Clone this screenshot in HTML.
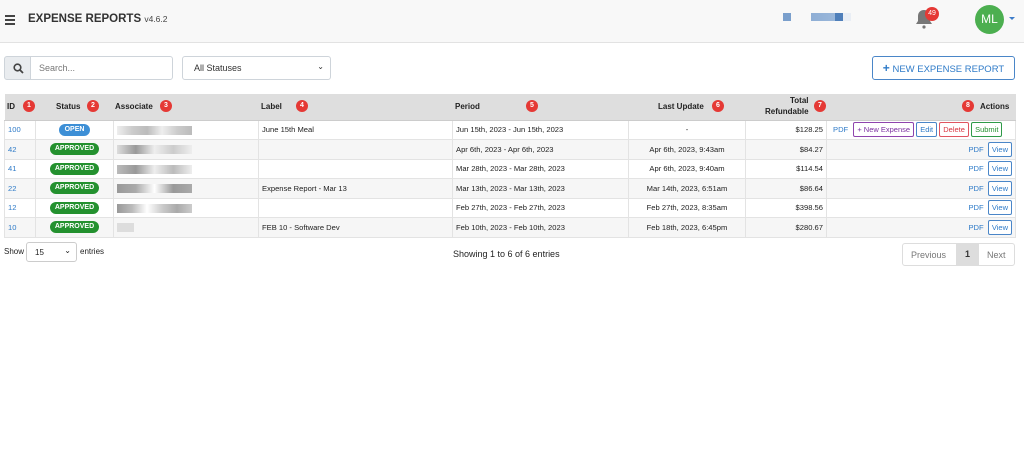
<!DOCTYPE html>
<html><head><style>
*{box-sizing:border-box;margin:0;padding:0}
body{width:1024px;height:455px;background:#fff;font-family:"Liberation Sans",Arial,sans-serif;font-size:8px;color:#222;position:relative;overflow:hidden}
.hdr{position:absolute;left:0;top:0;width:1024px;height:43px;background:#f8f8f8;border-bottom:1px solid #e2e2e2}
.abs{position:absolute}
table{position:absolute;left:4px;top:94px;border-collapse:collapse;table-layout:fixed;width:1011px}
th{background:#dedede;height:26px;border-bottom:1px solid #ccc}
td{height:19.5px;border:1px solid #e3e3e3;padding:0 3px;font-size:7.6px;white-space:nowrap;overflow:hidden}
tr:nth-child(odd) td{background:#f6f6f6}
.h{position:absolute;font-size:8px;font-weight:bold;color:#222;top:102px;white-space:nowrap}
.b{position:absolute;top:100px;background:#e53935;color:#fff;border-radius:50%;width:12px;height:12px;font-size:7px;line-height:12px;text-align:center;font-weight:bold}
.ap{display:inline-block;background:#24912f;color:#fff;border-radius:8px;font-size:7px;font-weight:bold;padding:2px 5px;line-height:8px}
.op{display:inline-block;background:#3d8fd6;color:#fff;border-radius:8px;font-size:7px;font-weight:bold;padding:2px 6px;line-height:8px}
a{color:#2f7bc8;text-decoration:none}
.btn{display:inline-block;border:1px solid #4a86c8;color:#2f7bc8;border-radius:2px;padding:1px 3px;font-size:7.5px;line-height:11px;background:#fff}
.c{text-align:center}.r{text-align:right}
.blur{display:inline-block;height:9px;vertical-align:middle}
</style></head><body>
<div class="hdr">
 <div class="abs" style="left:5px;top:15px;width:10px;height:2px;background:#444;box-shadow:0 4px 0 #444,0 8px 0 #444"></div>
 <div class="abs" style="left:28px;top:13px;font-size:11.5px;font-weight:bold;color:#333">EXPENSE REPORTS <span style="font-size:8.5px;font-weight:normal;color:#444">v4.6.2</span></div>
 <div class="abs" style="left:783px;top:13px;width:8px;height:8px;background:#7a9fcc"></div>
 <div class="abs" style="left:811px;top:13px;width:40px;height:8px;background:linear-gradient(90deg,#8eaed5 0,#9ab7da 60%,#4f7fba 60%,#4f7fba 80%,#e9eef5 80%)"></div>
 <svg class="abs" style="left:914px;top:8px" width="20" height="22" viewBox="0 0 20 22"><path d="M10 2c-4 0-6 3-6 6v5l-2 3h16l-2-3V8c0-3-2-6-6-6z" fill="#777"/><circle cx="10" cy="19" r="1.6" fill="#777"/></svg>
 <div class="abs" style="left:925px;top:7px;width:14px;height:14px;border-radius:50%;background:#e53935;color:#fff;font-size:7px;line-height:14px;text-align:center">49</div>
 <div class="abs" style="left:975px;top:5px;width:29px;height:29px;border-radius:50%;background:#4caf50;color:#fff;font-size:12px;line-height:29px;text-align:center">ML</div>
 <div class="abs" style="left:1009px;top:17px;border:3px solid transparent;border-top:3px solid #3d7cc9"></div>
</div>
<div class="abs" style="left:4px;top:56px;width:27px;height:24px;background:#e9ecef;border:1px solid #ced4da;border-radius:3px 0 0 3px"><svg style="position:absolute;left:8px;top:6px" width="11" height="11" viewBox="0 0 11 11"><circle cx="4.5" cy="4.5" r="3.3" stroke="#444" stroke-width="1.6" fill="none"/><path d="M7 7l3 3" stroke="#444" stroke-width="1.8"/></svg></div>
<div class="abs" style="left:30px;top:56px;width:143px;height:24px;border:1px solid #ced4da;border-radius:0 3px 3px 0;padding:6px 8px;font-size:9px;color:#777">Search...</div>
<div class="abs" style="left:182px;top:56px;width:149px;height:24px;border:1px solid #ced4da;border-radius:3px;padding:6px 11px;font-size:9px;color:#333">All Statuses<span style="position:absolute;right:6px;top:5px;font-size:8px">⌄</span></div>
<div class="abs" style="left:872px;top:56px;width:143px;height:24px;border:1px solid #4a86c8;border-radius:3px;color:#2f7bc8;font-size:9.5px;line-height:22px;text-align:center"><b style="font-size:12px">+</b> NEW EXPENSE REPORT</div>
<table>
<colgroup><col style="width:31px"><col style="width:78px"><col style="width:145px"><col style="width:194px"><col style="width:176px"><col style="width:117px"><col style="width:81px"><col style="width:189px"></colgroup>
<tr><th></th><th></th><th></th><th></th><th></th><th></th><th></th><th></th></tr>
<tr><td><a>100</a></td><td class="c"><span class="op">OPEN</span></td><td><span class="blur" style="width:75px;background:linear-gradient(90deg,#eee,#ccc,#bbb,#eee,#ccc,#bbb)"></span></td><td>June 15th Meal</td><td>Jun 15th, 2023 - Jun 15th, 2023</td><td class="c">-</td><td class="r">$128.25</td><td><a style="margin-left:3px">PDF</a> <span class="btn" style="border-color:#8e44ad;color:#7b2fa0;margin-left:3px">+ New Expense</span> <span class="btn">Edit</span> <span class="btn" style="border-color:#e05560;color:#d9343f">Delete</span> <span class="btn" style="border-color:#2e9a48;color:#24912f">Submit</span></td></tr>
<tr><td><a>42</a></td><td class="c"><span class="ap">APPROVED</span></td><td><span class="blur" style="width:75px;background:linear-gradient(90deg,#ddd,#999,#eee,#ccc,#eee)"></span></td><td></td><td>Apr 6th, 2023 - Apr 6th, 2023</td><td class="c">Apr 6th, 2023, 9:43am</td><td class="r">$84.27</td><td class="r"><a>PDF</a> &nbsp;<span class="btn">View</span></td></tr>
<tr><td><a>41</a></td><td class="c"><span class="ap">APPROVED</span></td><td><span class="blur" style="width:75px;background:linear-gradient(90deg,#bbb,#999,#eee,#bbb,#eee)"></span></td><td></td><td>Mar 28th, 2023 - Mar 28th, 2023</td><td class="c">Apr 6th, 2023, 9:40am</td><td class="r">$114.54</td><td class="r"><a>PDF</a> &nbsp;<span class="btn">View</span></td></tr>
<tr><td><a>22</a></td><td class="c"><span class="ap">APPROVED</span></td><td><span class="blur" style="width:75px;background:linear-gradient(90deg,#999,#aaa,#fff,#999,#aaa)"></span></td><td>Expense Report - Mar 13</td><td>Mar 13th, 2023 - Mar 13th, 2023</td><td class="c">Mar 14th, 2023, 6:51am</td><td class="r">$86.64</td><td class="r"><a>PDF</a> &nbsp;<span class="btn">View</span></td></tr>
<tr><td><a>12</a></td><td class="c"><span class="ap">APPROVED</span></td><td><span class="blur" style="width:75px;background:linear-gradient(90deg,#999,#bbb,#fff,#ccc,#aaa,#ccc)"></span></td><td></td><td>Feb 27th, 2023 - Feb 27th, 2023</td><td class="c">Feb 27th, 2023, 8:35am</td><td class="r">$398.56</td><td class="r"><a>PDF</a> &nbsp;<span class="btn">View</span></td></tr>
<tr><td><a>10</a></td><td class="c"><span class="ap">APPROVED</span></td><td><span class="blur" style="width:17px;background:#ddd"></span></td><td>FEB 10 - Software Dev</td><td>Feb 10th, 2023 - Feb 10th, 2023</td><td class="c">Feb 18th, 2023, 6:45pm</td><td class="r">$280.67</td><td class="r"><a>PDF</a> &nbsp;<span class="btn">View</span></td></tr>
</table>
<span class="h" style="left:7px">ID</span><span class="b" style="left:23px">1</span>
<span class="h" style="left:56px">Status</span><span class="b" style="left:87px">2</span>
<span class="h" style="left:115px">Associate</span><span class="b" style="left:160px">3</span>
<span class="h" style="left:261px">Label</span><span class="b" style="left:296px">4</span>
<span class="h" style="left:455px">Period</span><span class="b" style="left:526px">5</span>
<span class="h" style="left:658px">Last Update</span><span class="b" style="left:712px">6</span>
<span class="h" style="left:790px;top:96px">Total</span><span class="h" style="left:765px;top:107px">Refundable</span><span class="b" style="left:814px">7</span>
<span class="b" style="left:962px">8</span><span class="h" style="left:980px">Actions</span>
<div class="abs" style="left:4px;top:247px;font-size:8px">Show</div>
<div class="abs" style="left:26px;top:242px;width:51px;height:20px;border:1px solid #ccc;border-radius:3px;font-size:8px;padding:5px 8px">15<span style="position:absolute;right:5px;top:3px">⌄</span></div>
<div class="abs" style="left:80px;top:247px;font-size:8px">entries</div>
<div class="abs" style="left:453px;top:249px;font-size:9px">Showing 1 to 6 of 6 entries</div>
<div class="abs" style="left:902px;top:243px;width:113px;height:23px;border:1px solid #ddd;border-radius:3px;font-size:9px;color:#777">
 <span class="abs" style="left:8px;top:6px">Previous</span>
 <span class="abs" style="left:53px;top:0;width:23px;height:21px;background:#ddd;color:#333;text-align:center;line-height:21px;font-weight:bold">1</span>
 <span class="abs" style="left:84px;top:6px">Next</span>
</div>
</body></html>
